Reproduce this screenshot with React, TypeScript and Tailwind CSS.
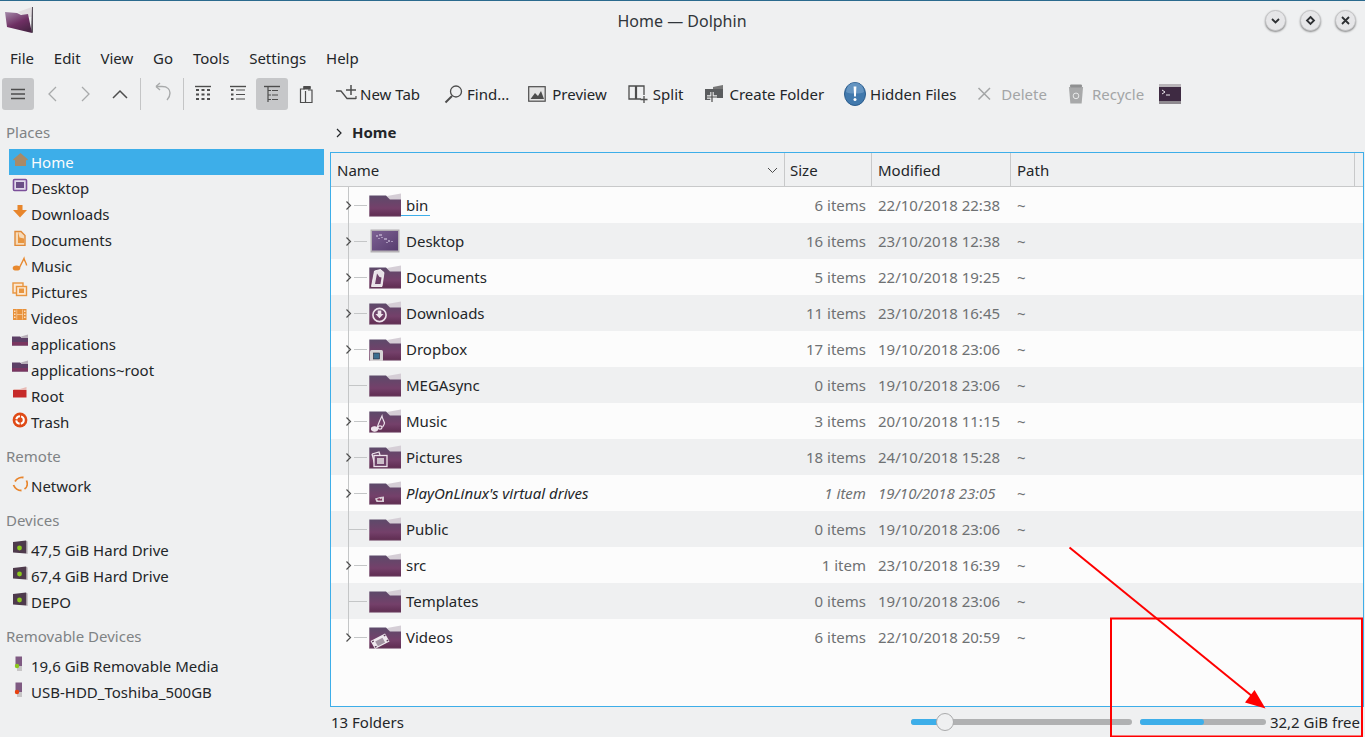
import { useId, type ReactNode } from "react";

type Row = { name: string; size: string; modified: string; icon: string; expand: boolean; italic?: boolean };

const rows: Row[] = [
  { name: "bin", size: "6 items", modified: "22/10/2018 22:38", icon: "plain", expand: true },
  { name: "Desktop", size: "16 items", modified: "23/10/2018 12:38", icon: "desktop", expand: true },
  { name: "Documents", size: "5 items", modified: "22/10/2018 19:25", icon: "documents", expand: true },
  { name: "Downloads", size: "11 items", modified: "23/10/2018 16:45", icon: "downloads", expand: true },
  { name: "Dropbox", size: "17 items", modified: "19/10/2018 23:06", icon: "dropbox", expand: true },
  { name: "MEGAsync", size: "0 items", modified: "19/10/2018 23:06", icon: "plain", expand: false },
  { name: "Music", size: "3 items", modified: "20/10/2018 11:15", icon: "music", expand: true },
  { name: "Pictures", size: "18 items", modified: "24/10/2018 15:28", icon: "pictures", expand: true },
  { name: "PlayOnLinux's virtual drives", size: "1 item", modified: "19/10/2018 23:05", icon: "wine", expand: true, italic: true },
  { name: "Public", size: "0 items", modified: "19/10/2018 23:06", icon: "plain", expand: false },
  { name: "src", size: "1 item", modified: "23/10/2018 16:39", icon: "plain", expand: true },
  { name: "Templates", size: "0 items", modified: "19/10/2018 23:06", icon: "plain", expand: false },
  { name: "Videos", size: "6 items", modified: "22/10/2018 20:59", icon: "videos", expand: true },
];

const menus = ["File", "Edit", "View", "Go", "Tools", "Settings", "Help"];

function FolderOverlay({ icon }: { icon: string }) {
  if (icon === "documents")
    return (
      <g>
        <path d="M2.5 21.5 5.5 6l6-1.5 3.5 3-2 14z" fill="#e8e2e8" stroke="#fff" strokeWidth="0.8" />
        <path d="M6 19 8 8.5l2.5 3.5 2 .5-1 6.5z" fill="#6d4068" />
      </g>
    );
  if (icon === "downloads")
    return (
      <g>
        <circle cx="10.5" cy="14" r="6.6" fill="none" stroke="#eee3ec" strokeWidth="1.6" />
        <path d="M8.7 9.5h3.6v3.5h2.2l-4 4.2-4-4.2h2.2z" fill="#eee3ec" />
      </g>
    );
  if (icon === "dropbox")
    return (
      <g>
        <rect x="1" y="13" width="13" height="11.5" rx="1.5" fill="#d8d4d6" />
        <rect x="4.5" y="16" width="6" height="6" fill="#3c6e8f" stroke="#223" strokeWidth="0.6" />
      </g>
    );
  if (icon === "music")
    return (
      <g fill="none" stroke="#eee3ec" strokeWidth="1.2">
        <ellipse cx="5.5" cy="20" rx="3" ry="2.2" fill="#eee3ec" />
        <path d="M8 19.5C9 15 11 11 13 7c.5 3 2 5 2.5 7-.2 1.5-1 2.8-2 4" />
        <ellipse cx="11" cy="18.5" rx="2" ry="1.6" />
      </g>
    );
  if (icon === "pictures")
    return (
      <g fill="none" stroke="#eee3ec" strokeWidth="1.3">
        <path d="M3 9l7-2 1 3" />
        <path d="M3 9l2.5 9" />
        <rect x="5" y="10.5" width="13" height="11" fill="#6d4068" />
        <rect x="8" y="13" width="7" height="6" fill="#cdbfca" stroke="none" />
      </g>
    );
  if (icon === "wine")
    return (
      <g>
        <path d="M6 17.5 11 16l4-.5v5.5H7.5z" fill="#d8cdd6" />
        <path d="M8 18l2.5-.7 1.5 1.2 1-1.5v2.5H9z" fill="#7b2b55" />
      </g>
    );
  if (icon === "videos")
    return (
      <g>
        <path d="M1.5 16 16 8.5l4.5 8L6 24z" fill="#efe9ee" />
        <path d="M6.2 16.5 13.5 12.7l2.6 4.8-7.2 3.8z" fill="#a495a4" />
        <path d="M2.8 16.2l1.6-.8.7 1.2-1.6.8zM14.5 10.2l1.6-.8.7 1.2-1.6.8zM5.6 21.5l1.6-.8.7 1.2-1.6.8zM17.3 15.4l1.6-.8.7 1.2-1.6.8z" fill="#5b3a58" />
      </g>
    );
  return null;
}

function Folder({ icon }: { icon: string }) {
  const id = useId();
  if (icon === "desktop")
    return (
      <svg width="32" height="24" viewBox="0 0 32 24" className="shrink-0">
        <defs>
          <linearGradient id={id} x1="0" y1="0" x2="1" y2="1">
            <stop offset="0" stopColor="#7d6193" />
            <stop offset="1" stopColor="#573d6f" />
          </linearGradient>
        </defs>
        <rect x="1.5" y="0.5" width="29" height="23" fill="#b4b0b4" />
        <rect x="3" y="2" width="26" height="19.5" fill={`url(#${id})`} />
        <path d="M7 6h2v2H7zM10 5h3v2h-3zM12 8h2v1h-2zM15 9h3v2h-3zM19 11h2v2h-2zM22 12h2v1h-2zM9 9h2v1H9zM17 13h2v1h-2z" fill="#b9a8c8" opacity="0.8" />
      </svg>
    );
  return (
    <svg width="32" height="24" viewBox="0 0 32 24" className="shrink-0">
      <defs>
        <linearGradient id={id} x1="0" y1="0" x2="0" y2="1">
          <stop offset="0" stopColor="#5d4a6a" />
          <stop offset="0.6" stopColor="#74406a" />
          <stop offset="1" stopColor="#5e2c50" />
        </linearGradient>
      </defs>
      <path d="M18 3 32 0.5V7H21z" fill="#d5ced6" />
      <path d="M0.3 2.5 H17 L21 6.5 H32 V23.6 H0.3z" fill={`url(#${id})`} />
      <path d="M0.3 23.4H32" stroke="#a78ea4" strokeWidth="0.6" />
      <FolderOverlay icon={icon} />
    </svg>
  );
}

function TreeLines({ expand, last }: { expand: boolean; last: boolean }) {
  return (
    <svg width="38" height="36" viewBox="0 0 38 36" className="shrink-0">
      <path d={last ? "M17.5 0V18" : "M17.5 0V36"} stroke="#c4c6c7" strokeWidth="1" />
      <path d={expand ? "M23 18.5H36" : "M18 18.5H36"} stroke="#c4c6c7" strokeWidth="1" />
      {expand && <path d="M15.5 14.5 19.5 18.5 15.5 22.5" fill="none" stroke="#4d4d4d" strokeWidth="1.2" />}
    </svg>
  );
}

function SideIcon({ name }: { name: string }) {
  const inner: Record<string, ReactNode> = {
    home: <path d="M8.5 1 16 7.5l-1 1-1-.8V14H3V7.7l-1 .8-1-1z" fill="#a98a68" />,
    desktop: (
      <>
        <rect x="1.5" y="1.5" width="13" height="11" rx="1" fill="#e0d8ea" stroke="#7b4f9a" strokeWidth="1.6" />
        <rect x="4" y="4" width="8" height="6" fill="#6a4d86" />
      </>
    ),
    downloads: <path d="M5.5 1h5v5H15l-7 7.5L1 6h4.5z" fill="#e8862c" />,
    documents: (
      <>
        <path d="M3 1.5h6l4 4v10H3z" fill="#f6dab9" stroke="#e08a38" strokeWidth="1.4" />
        <path d="M6 1.5l1.5 6 4.5 1v4.5H6z" fill="#e8953f" />
      </>
    ),
    music: (
      <>
        <ellipse cx="4.5" cy="12" rx="3.8" ry="2.6" fill="#e8892f" />
        <path d="M7.5 11.5 12 2.5c.5 2.5 2.2 4 2.6 7" fill="none" stroke="#e8892f" strokeWidth="1.4" />
      </>
    ),
    pictures: (
      <>
        <rect x="1" y="1" width="10" height="10" fill="#fbe8d2" stroke="#e8953f" strokeWidth="1.4" />
        <rect x="4.5" y="4.5" width="10" height="9" fill="#fbe8d2" stroke="#e8953f" strokeWidth="1.4" />
        <rect x="7" y="6.5" width="5" height="4.5" fill="#e8953f" />
      </>
    ),
    videos: (
      <>
        <rect x="1" y="1" width="13.5" height="11" fill="#e8913a" />
        <path d="M2 2.5h1.5V4H2zM2 5.5h1.5V7H2zM2 8.5h1.5V10H2zM12 2.5h1.5V4H12zM12 5.5h1.5V7H12zM12 8.5h1.5V10H12z" fill="#fbe0c4" />
        <path d="M4.5 1.5h.7v10h-.7zM10.3 1.5h.7v10h-.7zM5 6h5.5v.7H5z" fill="#f8cfa5" />
      </>
    ),
    folder: (
      <>
        <path d="M0 2.5H8L10 4H16V11.5H0z" fill="#5c3f66" />
        <path d="M9 2.5l7-2V4H10z" fill="#b9b0ba" />
        <path d="M0 8h16v3.5H0z" fill="#7a3660" />
      </>
    ),
    root: (
      <>
        <path d="M1 3 H8L14.5 1V4H2z" fill="#e8b9b4" />
        <path d="M1 4H14.5V11.5H1z" fill="#c62a2a" />
      </>
    ),
    trash: (
      <>
        <circle cx="8" cy="8" r="7.4" fill="#df4a16" />
        <circle cx="8" cy="8" r="3.8" fill="none" stroke="#fff" strokeWidth="2" strokeDasharray="5 1.2" />
      </>
    ),
    network: (
      <g fill="none" stroke="#e8852d" strokeWidth="1.8">
        <path d="M3 5.5C5 2 9 1 11.5 1.5" />
        <path d="M14.5 4.5c1.5 3.5 .5 7-2 8.5" />
        <path d="M9.5 14.5C6 14.5 3 12.5 1.5 9" />
      </g>
    ),
    drive: (
      <>
        <path d="M1 2 14 0.5V13.5L1 12.5z" fill="#4e3a4c" />
        <path d="M14 0.5 15.5 1.5V14L14 13.5z" fill="#a49ba2" />
        <circle cx="7.5" cy="8" r="2.4" fill="#8cc81e" />
      </>
    ),
    usb: (
      <>
        <rect x="3.5" y="0.5" width="6.5" height="10" fill="#7f5a82" />
        <rect x="5" y="10" width="5" height="5" fill="#c7c5c6" />
        <circle cx="5" cy="10" r="2.2" fill="#8cc81e" />
      </>
    ),
    usbred: (
      <>
        <rect x="3.5" y="0.5" width="6.5" height="10" fill="#7f5a82" />
        <rect x="5" y="10" width="5" height="5" fill="#c7c5c6" />
        <circle cx="5" cy="10" r="2.2" fill="#e8410f" />
      </>
    ),
  };
  return (
    <svg width="16" height="16" viewBox="0 0 16 16" className="shrink-0 -mt-[5px]">
      {inner[name]}
    </svg>
  );
}

function PlaceRow({ icon, label, active }: { icon: string; label: string; active?: boolean }) {
  return (
    <div className={`flex items-center h-[26px] pl-[3px] gap-[3px] ml-[9px] w-[315px] ${active ? "bg-[#3daee9] text-[#fcfcfc]" : "text-[#232629]"}`}>
      <SideIcon name={icon} />
      <span>{label}</span>
    </div>
  );
}

function Heading({ children }: { children: ReactNode }) {
  return <div className="h-[26px] pl-[6px] flex items-center text-[#7f8385]">{children}</div>;
}

function Tool({ label, icon, ml, gap, disabled }: { label: string; icon: ReactNode; ml: string; gap: string; disabled?: boolean }) {
  return (
    <div className={`flex items-center shrink-0 ${ml} ${gap} ${disabled ? "text-[#a3a5a6]" : "text-[#232629]"}`}>
      {icon}
      <span>{label}</span>
    </div>
  );
}

function ToolIcon({ children, w = 20, h = 20 }: { children: ReactNode; w?: number; h?: number }) {
  return (
    <svg width={w} height={h} viewBox={`0 0 ${w} ${h}`} fill="none" stroke="#4d4d4d" strokeWidth="1.2" className="shrink-0">
      {children}
    </svg>
  );
}

function WinButton({ children }: { children: ReactNode }) {
  return (
    <div className="w-[21px] h-[21px] rounded-full bg-[#e6e6e8] border border-[#c4c4c6] shadow-[0_1px_2px_rgba(0,0,0,0.45)] flex items-center justify-center">
      <svg width="11" height="11" viewBox="0 0 11 11" fill="none" stroke="#2e3033" strokeWidth="1.8">
        {children}
      </svg>
    </div>
  );
}

function Slider({ width, fill }: { width: string; fill: string }) {
  return (
    <div className={`h-[6px] rounded-full bg-[#b0b1b2] ${width}`}>
      <div className={`h-full rounded-full bg-[#3daee9] ${fill}`} />
    </div>
  );
}

export default function App() {
  const folderId = useId();
  return (
    <div className="relative w-[1365px] h-[737px] overflow-hidden bg-[#eff0f1] text-[15px] font-['Noto_Sans',sans-serif] text-[#232629] leading-none">
      <div className="h-px bg-[#2a6a8e]" />

      {/* title bar */}
      <div className="relative h-[39px] flex items-center pl-[5px] pr-[9px]">
        <svg width="29" height="29" viewBox="0 0 29 29" className="shrink-0">
          <defs>
            <linearGradient id={folderId} x1="0" y1="0" x2="0.6" y2="1">
              <stop offset="0" stopColor="#a58bab" />
              <stop offset="0.6" stopColor="#6e2f63" />
              <stop offset="1" stopColor="#4b2547" />
            </linearGradient>
          </defs>
          <path d="M13 6 27 1 28 11 20 11z" fill="#e2dde0" />
          <path d="M27 1H28V27L26 26z" fill="#57505a" />
          <path d="M0 6 12 7 16 9 23 8 27 27 2 21z" fill={`url(#${folderId})`} />
        </svg>
        <div className="flex-1 text-center text-[16px] text-[#31363b] pl-[65px]">Home — Dolphin</div>
        <div className="flex items-center gap-[14px]">
          <WinButton><path d="M2 4l3.5 3.5L9 4" /></WinButton>
          <WinButton><path d="M5.5 2 9 5.5 5.5 9 2 5.5z" /></WinButton>
          <WinButton><path d="M2 2l7 7M9 2l-7 7" /></WinButton>
        </div>
      </div>

      {/* menu bar */}
      <div className="h-[38px] flex items-center gap-[19.8px] pl-[10px] pb-[2px]">
        {menus.map(m => <span key={m}>{m}</span>)}
      </div>

      {/* toolbar */}
      <div className="h-[32px] flex items-center pl-[2px]">
        <div className="w-[32px] h-[32px] rounded-[3px] bg-[#c6c7c9] flex items-center justify-center shrink-0">
          <ToolIcon w={16} h={16}><path d="M1 3.5h14M1 8h14M1 12.5h14" strokeWidth="1.5" /></ToolIcon>
        </div>
        <svg width="108" height="32" viewBox="0 0 108 32" fill="none" className="shrink-0 ml-px">
          <path d="M23 9l-7 7 7 7" stroke="#a8aaab" strokeWidth="1.3" transform="translate(-2 0)" />
          <path d="M47 9l7 7-7 7" stroke="#a8aaab" strokeWidth="1.3" />
          <path d="M78 20l7-7 7 7" stroke="#4d4d4d" strokeWidth="1.5" />
          <path d="M105.5 0V32" stroke="#c4c5c6" strokeWidth="1" />
        </svg>
        <svg width="42" height="32" viewBox="0 0 42 32" fill="none" className="shrink-0">
          <path d="M13 8.5H19C25 8.5 27 12 27 15S26 20 24 22" stroke="#a8aaab" strokeWidth="1.4" />
          <path d="M13 8.5 17 5M13 8.5l4 3.5" stroke="#a8aaab" strokeWidth="1.4" />
          <path d="M40.5 0V32" stroke="#c4c5c6" strokeWidth="1" />
        </svg>
        <div className="ml-[2px] w-[32px] flex justify-center">
          <ToolIcon w={18} h={18}>
            <path d="M1 1.5h16" strokeWidth="1.4" />
            <path d="M2 5h3M7.5 5h3M13 5h3M2 9.5h3M7.5 9.5h3M13 9.5h3M2 14h3M7.5 14h3M13 14h3" strokeWidth="2.2" />
          </ToolIcon>
        </div>
        <div className="ml-[3px] w-[32px] flex justify-center">
          <ToolIcon w={18} h={18}>
            <path d="M1 1.5h16" strokeWidth="1.4" />
            <path d="M2 5h2.5M2 9.5h2.5M2 14h2.5" strokeWidth="2.2" />
            <path d="M7 5h9M7 9.5h9M7 14h9" />
          </ToolIcon>
        </div>
        <div className="ml-[2px] w-[32px] h-[32px] rounded-[3px] bg-[#c6c7c9] flex items-center justify-center shrink-0">
          <ToolIcon w={18} h={18}>
            <path d="M1 1.5h16" strokeWidth="1.4" />
            <path d="M5 2v15M5 5.5h3M5 10h3M5 14.5h3" />
            <path d="M9 5.5h6M9 10h6M9 14.5h6" />
          </ToolIcon>
        </div>
        <div className="ml-[11px] shrink-0">
          <ToolIcon w={16} h={20}>
            <path d="M3 18.5h10V6H9" />
            <path d="M3 18.5H1.5V5H5V2.5h6V4.5" />
            <path d="M6.5 7v11.5" />
            <path d="M5 3h6v2H5z" fill="#4d4d4d" />
          </ToolIcon>
        </div>
        <Tool ml="ml-[20px]" gap="gap-[3px]" label="New Tab" icon={
          <ToolIcon w={22} h={20}>
            <path d="M1 7h5l6 7.5h9" strokeWidth="1.3" />
            <path d="M16 1v10M11 6h10" strokeWidth="1.5" />
            <path d="M21 12v3" />
          </ToolIcon>
        } />
        <Tool ml="ml-[24px]" gap="gap-[4px]" label="Find..." icon={
          <ToolIcon w={19} h={20}>
            <circle cx="12" cy="7.5" r="5.5" strokeWidth="1.3" />
            <path d="M8 12 1.5 18.5" strokeWidth="2" />
          </ToolIcon>
        } />
        <Tool ml="ml-[19px]" gap="gap-[6px]" label="Preview" icon={
          <ToolIcon w={18} h={18}>
            <rect x="0.7" y="1.7" width="16.5" height="14.5" fill="#e3e3e3" />
            <path d="M2.5 14 7 8l3 3 3-5 3 8z" fill="#4d4d4d" stroke="none" />
          </ToolIcon>
        } />
        <Tool ml="ml-[21px]" gap="gap-[5px]" label="Split" icon={
          <ToolIcon w={20} h={20}>
            <path d="M13 15H1V2h15v9" strokeWidth="1.3" />
            <path d="M8 2v13" strokeWidth="2.2" />
            <path d="M16 12v7M12.5 15.5h7" strokeWidth="1.3" />
          </ToolIcon>
        } />
        <Tool ml="ml-[21px]" gap="gap-[5px]" label="Create Folder" icon={
          <ToolIcon w={20} h={20}>
            <path d="M9 3 19 1v4H9z" fill="#777" stroke="none" />
            <path d="M1 5h18v9H9v2H1z" fill="#5a5c5e" stroke="none" />
            <path d="M8 8v10M3 13h10" stroke="#eff0f1" strokeWidth="3.4" />
            <path d="M8 8v10M3 13h10" stroke="#4d4d4d" strokeWidth="1.2" />
          </ToolIcon>
        } />
        <Tool ml="ml-[20px]" gap="gap-[4px]" label="Hidden Files" icon={
          <svg width="22" height="24" viewBox="0 0 22 24" className="shrink-0">
            <ellipse cx="11" cy="12" rx="10.5" ry="11.5" fill="#4179ad" stroke="#2b5c8c" />
            <path d="M2 10a9 9.5 0 0 1 18 0c-3 2-15 2-18 0" fill="#7ba6cf" opacity="0.6" />
            <path d="M9.6 4.5h2.8l-.5 10h-1.8z" fill="#fff" />
            <circle cx="11" cy="17.5" r="1.5" fill="#fff" />
          </svg>
        } />
        <Tool ml="ml-[21px]" gap="gap-[9px]" disabled label="Delete" icon={
          <svg width="15" height="16" viewBox="0 0 15 16" fill="none" stroke="#a3a5a6" strokeWidth="1.5" className="shrink-0">
            <path d="M1.5 2l11.5 11.5M13 2 1.5 13.5" />
          </svg>
        } />
        <Tool ml="ml-[21px]" gap="gap-[8px]" disabled label="Recycle" icon={
          <svg width="16" height="22" viewBox="0 0 17 22" className="shrink-0">
            <path d="M1 3.5h15L14.5 21h-12z" fill="#a8a9aa" />
            <rect x="2" y="1" width="13" height="3" rx="1.5" fill="#8f9091" />
            <circle cx="8.5" cy="13" r="3" fill="none" stroke="#eceded" strokeWidth="1" />
          </svg>
        } />
        <div className="ml-[15px] shrink-0">
          <svg width="22" height="20" viewBox="0 0 22 20">
            <rect x="0" y="0" width="22" height="20" rx="1" fill="#3e2a42" />
            <rect x="0" y="0" width="22" height="3" fill="#b9b5b9" />
            <rect x="0" y="17" width="22" height="3" fill="#8f8a90" />
            <path d="M3 6l3 2-3 2" fill="none" stroke="#fff" strokeWidth="0.9" />
            <path d="M7 11h4" stroke="#fff" strokeWidth="0.9" />
          </svg>
        </div>
      </div>

      {/* body */}
      <div className="flex mt-[9px] h-[618px]">
        <aside className="w-[330px] shrink-0 flex flex-col">
          <Heading>Places</Heading>
          <div className="mt-[4px]">
            <PlaceRow icon="home" label="Home" active />
            <PlaceRow icon="desktop" label="Desktop" />
            <PlaceRow icon="downloads" label="Downloads" />
            <PlaceRow icon="documents" label="Documents" />
            <PlaceRow icon="music" label="Music" />
            <PlaceRow icon="pictures" label="Pictures" />
            <PlaceRow icon="videos" label="Videos" />
            <PlaceRow icon="folder" label="applications" />
            <PlaceRow icon="folder" label="applications~root" />
            <PlaceRow icon="root" label="Root" />
            <PlaceRow icon="trash" label="Trash" />
          </div>
          <div className="mt-[8px]"><Heading>Remote</Heading></div>
          <div className="mt-[4px]"><PlaceRow icon="network" label="Network" /></div>
          <div className="mt-[8px]"><Heading>Devices</Heading></div>
          <div className="mt-[4px]">
            <PlaceRow icon="drive" label="47,5 GiB Hard Drive" />
            <PlaceRow icon="drive" label="67,4 GiB Hard Drive" />
            <PlaceRow icon="drive" label="DEPO" />
          </div>
          <div className="mt-[8px]"><Heading>Removable Devices</Heading></div>
          <div className="mt-[4px]">
            <PlaceRow icon="usb" label="19,6 GiB Removable Media" />
            <PlaceRow icon="usbred" label="USB-HDD_Toshiba_500GB" />
          </div>
        </aside>

        <main className="flex-1 min-w-0 flex flex-col">
          <div className="h-[33px] flex items-center pl-[5px] pb-[6px] gap-[9px] font-bold">
            <svg width="8" height="10" viewBox="0 0 8 10" fill="none" stroke="#232629" strokeWidth="1.2" className="shrink-0">
              <path d="M2 1l4 4-4 4" />
            </svg>
            <span>Home</span>
          </div>

          <div className="w-[1034px] h-[555px] border border-[#3daee9] bg-[#fcfcfc] flex flex-col">
            <div className="h-[34px] shrink-0 bg-[#eff0f1] border-b border-[#c8c9ca] grid grid-cols-[454px_87px_139px_344px_1fr] items-stretch">
              <div className="flex items-center justify-between pl-[6px] pr-[6px] pt-[1px] border-r border-[#c8c9ca]">
                <span>Name</span>
                <svg width="11" height="7" viewBox="0 0 11 7" fill="none" stroke="#4d4d4d" strokeWidth="1">
                  <path d="M1 1l4.5 4.5L10 1" />
                </svg>
              </div>
              <div className="flex items-center pl-[5px] pt-[1px] border-r border-[#c8c9ca]">Size</div>
              <div className="flex items-center pl-[6px] pt-[1px] border-r border-[#c8c9ca]">Modified</div>
              <div className="flex items-center pl-[6px] pt-[1px] border-r border-[#c8c9ca]">Path</div>
              <div />
            </div>

            {rows.map((r, i) => (
              <div key={r.name} className={`h-[36px] shrink-0 grid grid-cols-[454px_87px_139px_1fr] items-center ${i % 2 ? "bg-[#eff0f1]" : ""}`}>
                <div className="flex items-center">
                  <TreeLines expand={r.expand} last={i === rows.length - 1} />
                  <Folder icon={r.icon} />
                  <span className={`text-[#232629] ${r.italic ? "italic" : ""} ${i === 0 ? "border-b border-[#3daee9] pb-[2px] mt-[3px] pr-[2px] pl-[5px]" : "ml-[5px]"}`}>{r.name}</span>
                </div>
                <div className={`text-right pr-[6px] text-[#6e7173] ${r.italic ? "italic" : ""}`}>{r.size}</div>
                <div className={`pl-[6px] text-[#6e7173] ${r.italic ? "italic" : ""}`}>{r.modified}</div>
                <div className="pl-[6px] text-[#6e7173]">~</div>
              </div>
            ))}
          </div>

          <div className="h-[30px] flex items-center pl-px">
            <span>13 Folders</span>
            <div className="ml-auto relative flex items-center">
              <Slider width="w-[221px]" fill="w-[34px]" />
              <div className="absolute left-[25px] w-[18px] h-[18px] rounded-full bg-[#eff0f1] border border-[#a9aaab]" />
            </div>
            <div className="ml-[8px]"><Slider width="w-[126px]" fill="w-[64px]" /></div>
            <span className="ml-[4px] mr-[5px]">32,2 GiB free</span>
          </div>
        </main>
      </div>

      {/* red annotation drawn over the screenshot */}
      <svg width="1365" height="737" viewBox="0 0 1365 737" fill="none" className="absolute inset-0 pointer-events-none">
        <rect x="1111" y="618.5" width="251" height="118" stroke="#ff0000" strokeWidth="2" />
        <path d="M1069.5 547.5 1258 701" stroke="#ff0000" strokeWidth="2" />
        <path d="M1265.5 708.5 1245 702.5 1254.5 690z" fill="#ff0000" />
      </svg>
    </div>
  );
}
